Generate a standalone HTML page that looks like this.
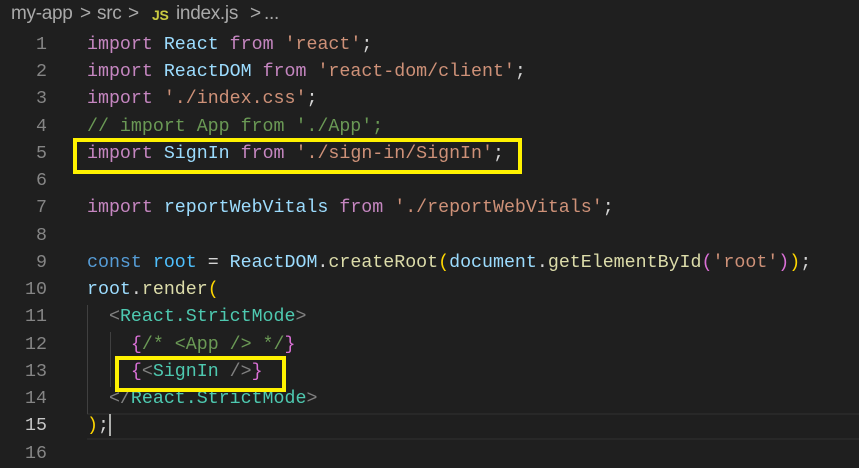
<!DOCTYPE html>
<html><head><meta charset="utf-8"><style>
body{margin:0;width:859px;height:460px;background:#1f1f1f;overflow:hidden;position:relative;font-family:"Liberation Mono",monospace}
.bc{position:absolute;top:3px;font:19px "Liberation Sans",sans-serif;color:#a9a9a9;white-space:pre;letter-spacing:-0.3px}
.js{color:#cbcb41;font-weight:bold;font-size:14px}
.ln{position:absolute;left:0;width:47px;text-align:right;color:#858585;font-size:18.3px;line-height:27.2px}
.c{position:absolute;left:87px;font-size:18.3px;line-height:27.2px;white-space:pre;color:#d4d4d4}
.k{color:#c586c0}.v{color:#9cdcfe}.s{color:#ce9178}.cm{color:#6a9955}.b{color:#569cd6}.r{color:#4fc1ff}.f{color:#dcdcaa}.t{color:#4ec9b0}.g{color:#808080}.y{color:#ffd700}.p{color:#da70d6}
.box{position:absolute;border:4px solid #fff200;box-sizing:border-box}
.guide{position:absolute;width:1px;background:#404040}
#w{position:absolute;left:0;top:2px;width:859px;height:460px}
</style></head><body>
<div class="bc" style="left:11px">my-app</div>
<div class="bc" style="left:80px">&gt;</div>
<div class="bc" style="left:97px">src</div>
<div class="bc" style="left:128px">&gt;</div>
<div class="bc js" style="left:152px;top:7px">JS</div>
<div class="bc" style="left:176px">index.js</div>
<div class="bc" style="left:250px">&gt;</div>
<div class="bc" style="left:264px">...</div>
<div id="w">
<div style="position:absolute;left:87px;right:0;top:411px;height:27px;border-top:2px solid #282828;border-bottom:2px solid #282828;box-sizing:border-box"></div>
<div class="guide" style="left:87px;top:303px;height:109px"></div>
<div class="guide" style="left:110px;top:330px;height:55px"></div>
<div class="ln" style="top:30px">1</div><div class="c" style="top:30px"><span class="k">import</span> <span class="v">React</span> <span class="k">from</span> <span class="s">'react'</span>;</div>
<div class="ln" style="top:57px">2</div><div class="c" style="top:57px"><span class="k">import</span> <span class="v">ReactDOM</span> <span class="k">from</span> <span class="s">'react-dom/client'</span>;</div>
<div class="ln" style="top:84px">3</div><div class="c" style="top:84px"><span class="k">import</span> <span class="s">'./index.css'</span>;</div>
<div class="ln" style="top:112px">4</div><div class="c cm" style="top:112px">// import App from './App';</div>
<div class="ln" style="top:139px">5</div><div class="c" style="top:139px"><span class="k">import</span> <span class="v">SignIn</span> <span class="k">from</span> <span class="s">'./sign-in/SignIn'</span>;</div>
<div class="ln" style="top:166px">6</div>
<div class="ln" style="top:193px">7</div><div class="c" style="top:193px"><span class="k">import</span> <span class="v">reportWebVitals</span> <span class="k">from</span> <span class="s">'./reportWebVitals'</span>;</div>
<div class="ln" style="top:221px">8</div>
<div class="ln" style="top:248px">9</div><div class="c" style="top:248px"><span class="b">const</span> <span class="r">root</span> = <span class="v">ReactDOM</span>.<span class="f">createRoot</span><span class="y">(</span><span class="v">document</span>.<span class="f">getElementById</span><span class="p">(</span><span class="s">'root'</span><span class="p">)</span><span class="y">)</span>;</div>
<div class="ln" style="top:275px">10</div><div class="c" style="top:275px"><span class="v">root</span>.<span class="f">render</span><span class="y">(</span></div>
<div class="ln" style="top:302px">11</div><div class="c" style="top:302px">  <span class="g">&lt;</span><span class="t">React.StrictMode</span><span class="g">&gt;</span></div>
<div class="ln" style="top:330px">12</div><div class="c" style="top:330px">    <span class="p">{</span><span class="cm">/* &lt;App /&gt; */</span><span class="p">}</span></div>
<div class="ln" style="top:357px">13</div><div class="c" style="top:357px">    <span class="p">{</span><span class="g">&lt;</span><span class="t">SignIn</span> <span class="g">/&gt;</span><span class="p">}</span></div>
<div class="ln" style="top:384px">14</div><div class="c" style="top:384px">  <span class="g">&lt;/</span><span class="t">React.StrictMode</span><span class="g">&gt;</span></div>
<div class="ln" style="top:411px;color:#c6c6c6">15</div><div class="c" style="top:411px"><span class="y">)</span>;<span style="display:inline-block;width:2px;height:22px;background:#aeafad;vertical-align:middle"></span></div>
<div class="ln" style="top:439px">16</div>
</div>
<div class="box" style="left:73px;top:138px;width:449px;height:36px"></div>
<div class="box" style="left:115px;top:356px;width:171px;height:36px"></div>
</body></html>
